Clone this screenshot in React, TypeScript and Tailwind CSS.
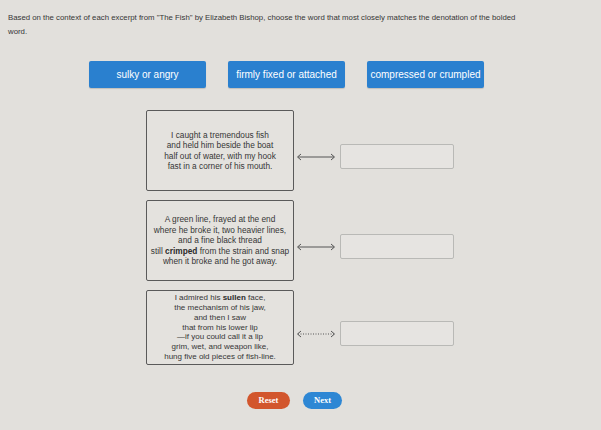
import React from 'react'

const choices = ['sulky or angry', 'firmly fixed or attached', 'compressed or crumpled']

type Line = { text: string }

const excerpts: { lines: Line[]; dotted?: boolean }[] = [
  {
    lines: [
      { text: 'I caught a tremendous fish' },
      { text: 'and held him beside the boat' },
      { text: 'half out of water, with my hook' },
      { text: 'fast in a corner of his mouth.' },
    ],
  },
  {
    lines: [
      { text: 'A green line, frayed at the end' },
      { text: 'where he broke it, two heavier lines,' },
      { text: 'and a fine black thread' },
      { text: 'still |crimped| from the strain and snap' },
      { text: 'when it broke and he got away.' },
    ],
  },
  {
    dotted: true,
    lines: [
      { text: 'I admired his |sullen| face,' },
      { text: 'the mechanism of his jaw,' },
      { text: 'and then I saw' },
      { text: 'that from his lower lip' },
      { text: '—if you could call it a lip' },
      { text: 'grim, wet, and weapon like,' },
      { text: 'hung five old pieces of fish-line.' },
    ],
  },
]

// bolded words are wrapped in |pipes|
function renderLine(text: string) {
  const parts = text.split('|')
  return parts.map((p, i) =>
    i % 2 === 1 ? (
      <b key={i} className="font-bold text-[#2a2a2a]">
        {p}
      </b>
    ) : (
      <span key={i}>{p}</span>
    )
  )
}

function Arrow({ dotted }: { dotted?: boolean }) {
  return (
    <svg width="40" height="8" viewBox="0 0 40 8" className="shrink-0">
      <line
        x1="2"
        y1="4"
        x2="38"
        y2="4"
        stroke="#555"
        strokeWidth="1"
        strokeDasharray={dotted ? '1 1.5' : undefined}
      />
      <polyline points="5,1 1.5,4 5,7" fill="none" stroke="#555" strokeWidth="1" />
      <polyline points="35,1 38.5,4 35,7" fill="none" stroke="#555" strokeWidth="1" />
    </svg>
  )
}

export default function App() {
  return (
    <div
      className="w-[601px] h-[430px] bg-[#e2e0dc] overflow-hidden text-[#333]"
      style={{ fontFamily: '"Liberation Sans", Arial, sans-serif' }}
    >
      {/* Prompt */}
      <p className="pl-2 pt-[11px] w-[528px] text-[7.8px] leading-[14px] text-[#363636]">
        Based on the context of each excerpt from "The Fish" by Elizabeth Bishop, choose the word that
        most closely matches the denotation of the bolded word.
      </p>

      {/* Word bank */}
      <div className="flex gap-[22px] pl-[89px] mt-[22px]">
        {choices.map((c) => (
          <button
            key={c}
            className="w-[117px] h-[27px] rounded-[2px] bg-[#2a80cf] text-white text-[10px] flex items-center justify-center shadow-[0_1px_1px_rgba(0,0,0,0.15)]"
          >
            {c}
          </button>
        ))}
      </div>

      {/* Excerpts */}
      <div className="flex flex-col gap-[9px] pl-[146px] mt-[22px]">
        {excerpts.map((ex, i) => (
          <div key={i} className="flex items-center">
            <div
              className={`w-[148px] border border-[#5a5a5a] rounded-[2px] bg-[#e4e2de] flex flex-col items-center justify-center text-[#363636] ${
                i === 2 ? 'h-[75px] text-[8px] leading-[9.8px]' : 'h-[81px] text-[8.3px] leading-[10.5px]'
              }`}
            >
              {ex.lines.map((l, j) => (
                <div key={j} className="whitespace-nowrap">
                  {renderLine(l.text)}
                </div>
              ))}
            </div>
            <div className="flex items-center gap-[4px] ml-[2px] mt-[12px]">
              <Arrow dotted={ex.dotted} />
              <div className="w-[114px] h-[25px] border border-[#b9b9b6] rounded-[2px] bg-[#e6e4e1]" />
            </div>
          </div>
        ))}
      </div>

      {/* Actions */}
      <div className="flex gap-[13px] pl-[247px] mt-[27px]">
        <button
          className="w-[43px] h-[17px] rounded-full bg-[#d2562d] text-white text-[8.5px] font-bold flex items-center justify-center"
          style={{ fontFamily: '"Liberation Serif", serif' }}
        >
          Reset
        </button>
        <button
          className="w-[39px] h-[17px] rounded-full bg-[#2e87d4] text-white text-[8.5px] font-bold flex items-center justify-center"
          style={{ fontFamily: '"Liberation Serif", serif' }}
        >
          Next
        </button>
      </div>
    </div>
  )
}
